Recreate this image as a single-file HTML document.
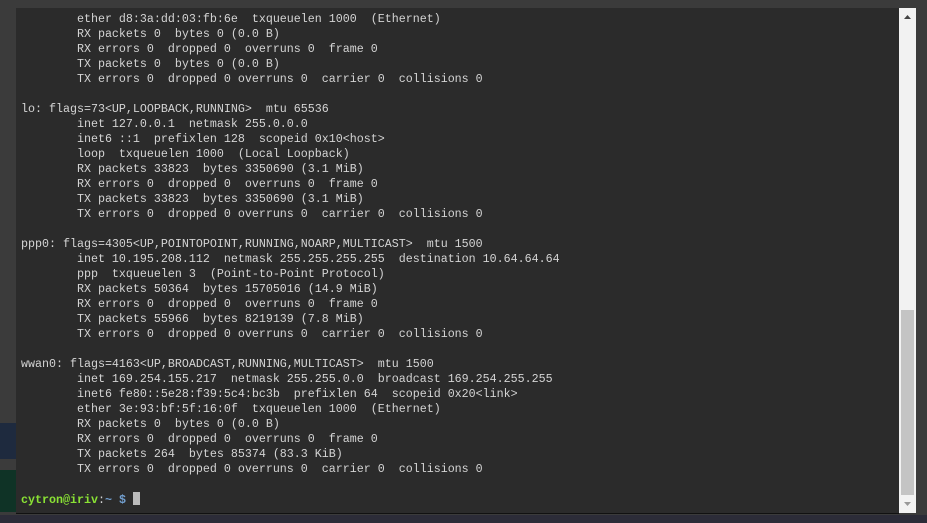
<!DOCTYPE html>
<html><head><style>
html,body{margin:0;padding:0;width:927px;height:523px;overflow:hidden;background:#3b3b3b;}
#t{position:absolute;left:16px;top:8px;width:883px;height:505px;background:#2b2b2b;border-bottom:1px solid #111;}
pre{position:absolute;left:5px;top:4px;margin:0;font-family:"Liberation Mono",monospace;font-size:11.67px;line-height:15px;color:#d4d4d4;}
.g{color:#8ae234;font-weight:bold}.b{color:#729fcf;font-weight:bold}
.cur{display:inline-block;width:7px;height:13px;background:#bbb;vertical-align:-2px}
#sb{position:absolute;left:899px;top:8px;width:17px;height:505px;background:#f2f2f2;}
#th{position:absolute;left:2px;top:302px;width:13px;height:185px;background:#c4c4c4;}
#bot{position:absolute;left:0;top:515px;width:927px;height:8px;background:#2c2c38;}
#l1{position:absolute;left:0;top:423px;width:16px;height:36px;background:#1e2a3e;}
#l2{position:absolute;left:0;top:470px;width:16px;height:42px;background:#0f3326;}
</style></head><body>
<div id="l1"></div><div id="l2"></div><div id="bot"></div>
<div id="t"><pre>        ether d8:3a:dd:03:fb:6e  txqueuelen 1000  (Ethernet)
        RX packets 0  bytes 0 (0.0 B)
        RX errors 0  dropped 0  overruns 0  frame 0
        TX packets 0  bytes 0 (0.0 B)
        TX errors 0  dropped 0 overruns 0  carrier 0  collisions 0

lo: flags=73&lt;UP,LOOPBACK,RUNNING&gt;  mtu 65536
        inet 127.0.0.1  netmask 255.0.0.0
        inet6 ::1  prefixlen 128  scopeid 0x10&lt;host&gt;
        loop  txqueuelen 1000  (Local Loopback)
        RX packets 33823  bytes 3350690 (3.1 MiB)
        RX errors 0  dropped 0  overruns 0  frame 0
        TX packets 33823  bytes 3350690 (3.1 MiB)
        TX errors 0  dropped 0 overruns 0  carrier 0  collisions 0

ppp0: flags=4305&lt;UP,POINTOPOINT,RUNNING,NOARP,MULTICAST&gt;  mtu 1500
        inet 10.195.208.112  netmask 255.255.255.255  destination 10.64.64.64
        ppp  txqueuelen 3  (Point-to-Point Protocol)
        RX packets 50364  bytes 15705016 (14.9 MiB)
        RX errors 0  dropped 0  overruns 0  frame 0
        TX packets 55966  bytes 8219139 (7.8 MiB)
        TX errors 0  dropped 0 overruns 0  carrier 0  collisions 0

wwan0: flags=4163&lt;UP,BROADCAST,RUNNING,MULTICAST&gt;  mtu 1500
        inet 169.254.155.217  netmask 255.255.0.0  broadcast 169.254.255.255
        inet6 fe80::5e28:f39:5c4:bc3b  prefixlen 64  scopeid 0x20&lt;link&gt;
        ether 3e:93:bf:5f:16:0f  txqueuelen 1000  (Ethernet)
        RX packets 0  bytes 0 (0.0 B)
        RX errors 0  dropped 0  overruns 0  frame 0
        TX packets 264  bytes 85374 (83.3 KiB)
        TX errors 0  dropped 0 overruns 0  carrier 0  collisions 0

<span class="g">cytron@iriv</span>:<span class="b">~ $</span> <span class="cur"></span></pre></div>
<div id="sb"><svg width="17" height="505" style="position:absolute;left:0;top:0"><path d="M5 11h7L8.5 7z" fill="#444"/><path d="M5 494h7L8.5 498z" fill="#999"/></svg><div id="th"></div></div>
</body></html>
